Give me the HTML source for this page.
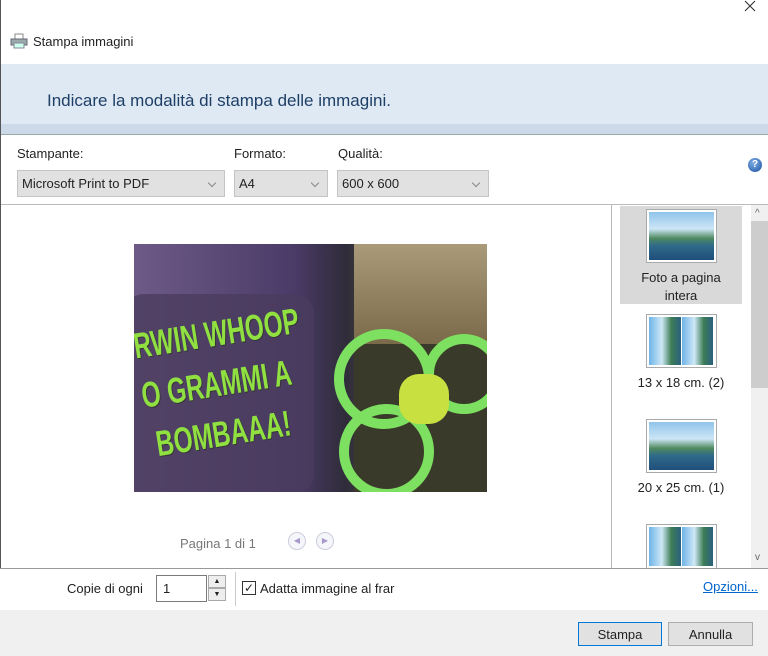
<!DOCTYPE html>
<html><head><meta charset="utf-8"><style>
*{box-sizing:border-box;margin:0;padding:0}
body{width:768px;height:656px;position:relative;overflow:hidden;background:#fff;font-family:"Liberation Sans",sans-serif;font-size:13px;color:#222}
.a{position:absolute}
.sel{position:absolute;top:170px;height:27px;background:#e1e1e1;border:1px solid #c4c4c4;padding:5px 0 0 4px;font-size:13px}
.sel:after{content:"";position:absolute;right:9px;top:9px;width:5px;height:5px;border-right:1px solid #888;border-bottom:1px solid #888;transform:rotate(45deg)}
.th{position:absolute;left:646px;width:71px;height:54px;border:1px solid #aaa;background:#fff;padding:2px}
.land{width:100%;height:100%;background:linear-gradient(180deg,#8fc4ea 0%,#cde6f6 35%,#4f8a5f 55%,#2f6a8a 70%,#1f4f7a 100%)}
.port{float:left;width:50%;height:100%;border-right:1px solid #fff;background:linear-gradient(90deg,#6fb3e6 0%,#cfe8f7 40%,#3d7d55 70%,#2a5f80 100%)}
.lbl{position:absolute;left:620px;width:122px;text-align:center;font-size:13px}
.btn{position:absolute;top:622px;height:24px;background:#e1e1e1;border:1px solid #adadad;text-align:center;padding-top:4px;font-size:13px}
</style></head><body>
<div class="a" style="left:0;top:0;width:1px;height:568px;background:#555"></div>
<svg class="a" style="left:744px;top:0" width="12" height="12" viewBox="0 0 12 12"><path d="M1 1L11 11M11 1L1 11" stroke="#333" stroke-width="1.1"/></svg>
<svg class="a" style="left:10px;top:33px" width="18" height="16" viewBox="0 0 18 16"><rect x="5" y="1" width="8" height="5" fill="#fff" stroke="#888"/><rect x="1" y="6" width="16" height="6" fill="#9aa" stroke="#667"/><rect x="4" y="10" width="10" height="5" fill="#cfe" stroke="#889"/></svg>
<div class="a" style="left:33px;top:34px;font-size:13px">Stampa immagini</div>
<div class="a" style="left:1px;top:64px;width:767px;height:60px;background:#dfe9f4"></div>
<div class="a" style="left:1px;top:124px;width:767px;height:10px;background:#cbd9e8"></div>
<div class="a" style="left:1px;top:134px;width:767px;height:1px;background:#9aa"></div>
<div class="a" style="left:47px;top:91px;font-size:17px;color:#1e3f66">Indicare la modalità di stampa delle immagini.</div>
<div class="a" style="left:17px;top:146px">Stampante:</div>
<div class="a" style="left:234px;top:146px">Formato:</div>
<div class="a" style="left:338px;top:146px">Qualità:</div>
<div class="sel" style="left:17px;width:208px">Microsoft Print to PDF</div>
<div class="sel" style="left:234px;width:94px">A4</div>
<div class="sel" style="left:337px;width:152px">600 x 600</div>
<div class="a" style="left:748px;top:158px;width:14px;height:14px;border-radius:50%;background:radial-gradient(circle at 40% 35%,#7fb0e8,#1c4fa0);color:#fff;font-size:10px;font-weight:bold;text-align:center;line-height:14px">?</div>
<div class="a" style="left:1px;top:204px;width:767px;height:1px;background:#bbb"></div>
<div class="a" style="left:134px;top:244px;width:353px;height:248px;overflow:hidden;background:linear-gradient(90deg,#6e5a86 0%,#4b3b68 45%,#2f2c3a 60%,#7a6b4a 85%,#9a8050 100%)">
<div class="a" style="left:220px;top:0;width:133px;height:100px;background:linear-gradient(180deg,#a99a7a,#7a6a4a)"></div>
<div class="a" style="left:220px;top:100px;width:133px;height:148px;background:#3a3a2a"></div>
<div class="a" style="left:-10px;top:50px;width:190px;height:200px;border-radius:20px;background:#4a3c5e;opacity:.8"></div>
<div class="a" style="left:200px;top:85px;width:100px;height:100px;border-radius:50%;border:10px solid #7de060"></div>
<div class="a" style="left:205px;top:160px;width:95px;height:95px;border-radius:50%;border:10px solid #7de060"></div>
<div class="a" style="left:290px;top:90px;width:80px;height:80px;border-radius:50%;border:10px solid #7de060"></div>
<div class="a" style="left:265px;top:130px;width:50px;height:50px;border-radius:40%;background:#c8e040"></div>
<div class="a" style="left:-4px;top:78px;font:bold 36px 'Liberation Sans',sans-serif;color:#8fe040;transform:rotate(-9deg) scale(0.68,1);transform-origin:0 0;line-height:50px;text-shadow:1px 1px 0 #333;white-space:nowrap">RWIN WHOOP<br>O GRAMMI A<br>&nbsp;BOMBAAA!</div>
</div>
<div class="a" style="left:180px;top:536px;color:#777">Pagina 1 di 1</div>
<div class="a" style="left:288px;top:532px;width:18px;height:18px;border-radius:50%;border:1px solid #ccd;background:#f4f6fa;color:#a9c;font-size:8px;text-align:center;line-height:16px">◀</div>
<div class="a" style="left:316px;top:532px;width:18px;height:18px;border-radius:50%;border:1px solid #ccd;background:#f4f6fa;color:#a9c;font-size:8px;text-align:center;line-height:16px">▶</div>
<div class="a" style="left:611px;top:205px;width:1px;height:363px;background:#bbb"></div>
<div class="a" style="left:620px;top:206px;width:122px;height:98px;background:#d9d9d9"></div>
<div class="th" style="top:209px"><div class="land"></div></div>
<div class="lbl" style="top:269px;line-height:18px">Foto a pagina<br>intera</div>
<div class="th" style="top:314px"><div class="port"></div><div class="port"></div></div>
<div class="lbl" style="top:375px">13 x 18 cm. (2)</div>
<div class="th" style="top:419px"><div class="land"></div></div>
<div class="lbl" style="top:480px">20 x 25 cm. (1)</div>
<div class="th" style="top:524px;height:44px;border-bottom:none"><div class="port"></div><div class="port"></div></div>
<div class="a" style="left:751px;top:205px;width:17px;height:363px;background:#f0f0f0"></div>
<div class="a" style="left:751px;top:221px;width:17px;height:167px;background:#cdcdcd"></div>
<div class="a" style="left:755px;top:208px;font-size:10px;color:#666">^</div>
<div class="a" style="left:755px;top:552px;font-size:10px;color:#666">v</div>
<div class="a" style="left:0;top:568px;width:768px;height:1px;background:#999"></div>
<div class="a" style="left:67px;top:581px">Copie di ogni</div>
<div class="a" style="left:156px;top:575px;width:51px;height:27px;border:1px solid #7a7a7a;padding:5px 0 0 6px">1</div>
<div class="a" style="left:208px;top:575px;width:18px;height:13px;border:1px solid #aaa;background:#eee;font-size:7px;text-align:center;line-height:11px">▲</div>
<div class="a" style="left:208px;top:588px;width:18px;height:13px;border:1px solid #aaa;background:#eee;font-size:7px;text-align:center;line-height:11px">▼</div>
<div class="a" style="left:235px;top:572px;width:1px;height:34px;background:#ccc"></div>
<div class="a" style="left:242px;top:581px;width:14px;height:14px;border:1px solid #333;font-size:12px;line-height:12px;text-align:center">✓</div>
<div class="a" style="left:260px;top:581px">Adatta immagine al frar</div>
<div class="a" style="left:703px;top:579px;color:#0066cc;text-decoration:underline">Opzioni...</div>
<div class="a" style="left:0;top:610px;width:768px;height:46px;background:#f0f0f0"></div>
<div class="btn" style="left:578px;width:84px;border:1px solid #0078d7">Stampa</div>
<div class="btn" style="left:668px;width:85px">Annulla</div>
</body></html>
